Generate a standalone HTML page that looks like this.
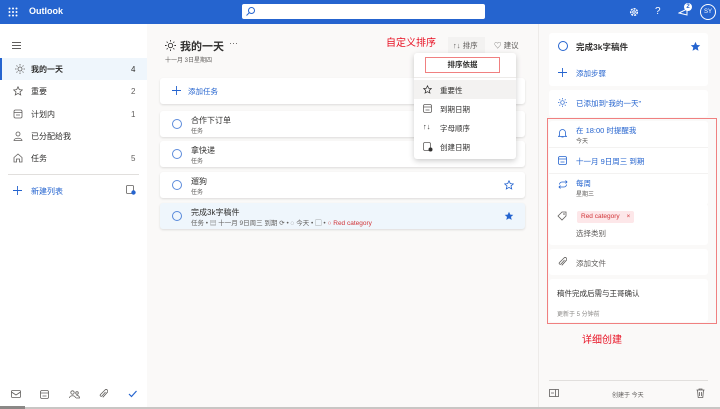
<!DOCTYPE html>
<html><head><meta charset="utf-8">
<style>
*{margin:0;padding:0;box-sizing:border-box}
body{width:720px;height:409px;overflow:hidden;font-family:"Liberation Sans","Noto Sans CJK SC",sans-serif;background:#faf9f8;position:relative;font-size:8px;color:#323130}
.a{position:absolute}
.top{left:0;top:0;width:720px;height:24px;background:#2564cf}
.side{left:0;top:24px;width:147px;height:385px;background:#fff}
.nav{position:absolute;left:0;width:147px;height:22px;display:flex;align-items:center}
.nav .ic{position:absolute;left:13px;width:10px;height:10px}
.nav .t{position:absolute;left:31px;font-size:8px}
.nav .n{position:absolute;left:131px;font-size:8px;color:#605e5c}
.card{position:absolute;background:#fff;border-radius:3px;box-shadow:0 1px 2px rgba(0,0,0,.12)}
.task{left:160px;width:365px;height:26px}
.task .c{position:absolute;left:12px;top:8px;width:10px;height:10px;border:1.3px solid #2564cf;border-radius:50%;opacity:.75}
.task .t1{position:absolute;left:31px;top:4px;font-size:8px}
.task .t2{position:absolute;left:31px;top:15px;font-size:6px;color:#605e5c}
.blue{color:#2564cf}
.mi{position:absolute;left:414px;width:102px;height:19px;font-size:7.5px}
.mi span{position:absolute;left:26px;top:5px}
.mi svg{position:absolute;left:9px;top:5px}
.rc{position:absolute;left:549px;width:159px;background:#fff;border-radius:3px}
</style></head><body>
<div class="a top"></div>
<svg class="a" style="left:8px;top:7px" width="10" height="10"><g fill="#fff"><circle cx="1.5" cy="1.5" r="1"/><circle cx="5" cy="1.5" r="1"/><circle cx="8.5" cy="1.5" r="1"/><circle cx="1.5" cy="5" r="1"/><circle cx="5" cy="5" r="1"/><circle cx="8.5" cy="5" r="1"/><circle cx="1.5" cy="8.5" r="1"/><circle cx="5" cy="8.5" r="1"/><circle cx="8.5" cy="8.5" r="1"/></g></svg>
<div class="a" style="left:29px;top:6px;color:#fff;font-size:9px;font-weight:bold">Outlook</div>
<div class="a" style="left:242px;top:4px;width:243px;height:15px;background:#fff;border-radius:2px"></div>
<svg class="a" style="left:245px;top:6px" width="11" height="11"><circle cx="6.5" cy="4.5" r="3" fill="none" stroke="#2564cf" stroke-width="1"/><path d="M4.3 6.7L1.5 9.5" stroke="#2564cf" stroke-width="1"/></svg>
<svg class="a" style="left:629px;top:7px" width="10" height="10"><circle cx="5" cy="5" r="3.3" fill="none" stroke="#fff" stroke-width="1.5" stroke-dasharray="2 1"/><circle cx="5" cy="5" r="1.3" fill="none" stroke="#fff"/></svg>
<div class="a" style="left:655px;top:6px;color:#fff;font-size:10px">?</div>
<svg class="a" style="left:678px;top:7px" width="12" height="10"><path d="M1 6l8-4v6z" fill="none" stroke="#fff"/></svg>
<div class="a" style="left:684px;top:3px;width:8px;height:8px;border-radius:50%;background:#fff;color:#2564cf;font-size:6px;text-align:center;line-height:8px;font-weight:bold">2</div>
<div class="a" style="left:700px;top:4px;width:16px;height:16px;border-radius:50%;border:1px solid #fff;color:#fff;font-size:6px;text-align:center;line-height:14px">SY</div>

<div class="a side"></div>
<div class="a" style="left:12px;top:42px;width:9px;height:1px;background:#605e5c;box-shadow:0 3px 0 #605e5c,0 6px 0 #605e5c"></div>
<div class="nav" style="top:58px;background:#eff6fc;border-left:2px solid #2564cf"><svg class="ic" viewBox="0 0 10 10"><circle cx="5" cy="5" r="2" fill="none" stroke="#605e5c" stroke-width=".8"/><path d="M5 0v1.5M5 8.5V10M0 5h1.5M8.5 5H10M1.5 1.5l1 1M7.5 7.5l1 1M1.5 8.5l1-1M7.5 2.5l1-1" stroke="#605e5c" stroke-width=".8"/></svg><span class="t" style="font-weight:bold;left:29px">我的一天</span><span class="n" style="left:129px;color:#323130">4</span></div>
<div class="nav" style="top:80px"><svg class="ic" viewBox="0 0 10 10"><path d="M5 .8l1.3 2.8 3 .3-2.3 2 .7 3L5 7.4 2.3 8.9l.7-3-2.3-2 3-.3z" fill="none" stroke="#605e5c" stroke-width=".8"/></svg><span class="t">重要</span><span class="n">2</span></div>
<div class="nav" style="top:103px"><svg class="ic" viewBox="0 0 10 10"><rect x="1" y="1" width="8" height="8" rx="1.5" fill="none" stroke="#605e5c" stroke-width=".8"/><path d="M1 3.5h8M3 6h4" stroke="#605e5c" stroke-width=".8"/></svg><span class="t">计划内</span><span class="n">1</span></div>
<div class="nav" style="top:125px"><svg class="ic" viewBox="0 0 10 10"><circle cx="5" cy="3" r="2" fill="none" stroke="#605e5c" stroke-width=".8"/><path d="M1 9.5c0-3 8-3 8 0z" fill="none" stroke="#605e5c" stroke-width=".8"/></svg><span class="t">已分配给我</span></div>
<div class="nav" style="top:147px"><svg class="ic" viewBox="0 0 10 10"><path d="M1 9V4.5L5 1l4 3.5V9H6.5V6h-3v3z" fill="none" stroke="#605e5c" stroke-width=".8"/></svg><span class="t">任务</span><span class="n">5</span></div>
<div class="a" style="left:8px;top:174px;width:131px;height:1px;background:#e1dfdd"></div>
<svg class="a" style="left:13px;top:186px" width="9" height="9"><path d="M4.5 0v9M0 4.5h9" stroke="#2564cf" stroke-width=".9"/></svg>
<div class="a blue" style="left:31px;top:186px;font-size:8px">新建列表</div>
<svg class="a" style="left:126px;top:185px" width="10" height="10"><rect x=".5" y=".5" width="7" height="8" rx="1" fill="none" stroke="#605e5c" stroke-width=".8"/><circle cx="7.5" cy="7.5" r="2.2" fill="#2564cf"/></svg>
<!-- bottom icons -->
<svg class="a" style="left:11px;top:390px" width="10" height="8"><rect x=".5" y=".5" width="9" height="7" rx="1" fill="none" stroke="#605e5c" stroke-width=".8"/><path d="M.5 2l4.5 3 4.5-3" fill="none" stroke="#605e5c" stroke-width=".8"/></svg>
<svg class="a" style="left:40px;top:390px" width="9" height="9"><rect x=".5" y=".5" width="8" height="8" rx="1.5" fill="none" stroke="#605e5c" stroke-width=".8"/><path d="M.5 3h8M2.5 6h4" stroke="#605e5c" stroke-width=".8"/></svg>
<svg class="a" style="left:69px;top:390px" width="11" height="9"><circle cx="3.5" cy="2.5" r="1.7" fill="none" stroke="#605e5c" stroke-width=".8"/><path d="M.5 8c0-3 6-3 6 0" fill="none" stroke="#605e5c" stroke-width=".8"/><circle cx="8" cy="3" r="1.3" fill="none" stroke="#605e5c" stroke-width=".8"/><path d="M7 8h3.5c0-2-1.5-2.7-3-2.5" fill="none" stroke="#605e5c" stroke-width=".8"/></svg>
<svg class="a" style="left:99px;top:389px" width="9" height="10"><path d="M6.5 3L3 7a1 1 0 01-1.5-1.5L6 1a1.6 1.6 0 012.3 2.3L3.8 8.3" fill="none" stroke="#605e5c" stroke-width=".8"/></svg>
<svg class="a" style="left:128px;top:390px" width="9" height="8"><path d="M1 4l2.5 2.5L8.5 1" fill="none" stroke="#2564cf" stroke-width="1.2"/></svg>
<div class="a" style="left:0;top:406px;width:25px;height:3px;background:#8a8886"></div>
<div class="a" style="left:25px;top:407px;width:695px;height:2px;background:#c8c6c4"></div>

<!-- main -->
<svg class="a" style="left:165px;top:40px" width="11" height="11" viewBox="0 0 10 10"><circle cx="5" cy="5" r="2" fill="none" stroke="#323130" stroke-width=".8"/><path d="M5 0v1.5M5 8.5V10M0 5h1.5M8.5 5H10M1.5 1.5l1 1M7.5 7.5l1 1M1.5 8.5l1-1M7.5 2.5l1-1" stroke="#323130" stroke-width=".8"/></svg>
<div class="a" style="left:180px;top:38px;font-size:11px;font-weight:bold">我的一天</div>
<div class="a" style="left:229px;top:38px;font-size:9px;color:#605e5c">···</div>
<div class="a" style="left:165px;top:55px;font-size:6px;color:#605e5c">十一月 3日星期四</div>
<div class="a" style="left:386px;top:34px;font-size:10px;color:#e81123">自定义排序</div>
<div class="a" style="left:448px;top:37px;width:37px;height:16px;background:#f3f2f1"></div>
<div class="a" style="left:453px;top:40px;font-size:7.5px;color:#605e5c">↑↓ 排序</div>
<div class="a" style="left:494px;top:40px;font-size:7.5px;color:#605e5c">♡ 建议</div>

<div class="card" style="left:160px;top:78px;width:365px;height:26px"></div>
<svg class="a" style="left:172px;top:86px" width="9" height="9"><path d="M4.5 0v9M0 4.5h9" stroke="#2564cf" stroke-width=".9"/></svg>
<div class="a blue" style="left:188px;top:86px;font-size:7.5px">添加任务</div>
<div class="card task" style="top:111px"><div class="c"></div><div class="t1">合作下订单</div><div class="t2">任务</div></div>
<div class="card task" style="top:141px"><div class="c"></div><div class="t1">拿快递</div><div class="t2">任务</div></div>
<div class="card task" style="top:172px"><div class="c"></div><div class="t1">遛狗</div><div class="t2">任务</div><svg class="a" style="left:344px;top:8px" width="10" height="10" viewBox="0 0 10 10"><path d="M5 .8l1.3 2.8 3 .3-2.3 2 .7 3L5 7.4 2.3 8.9l.7-3-2.3-2 3-.3z" fill="none" stroke="#2564cf" stroke-width=".8"/></svg></div>
<div class="card task" style="top:203px;background:#eff6fc"><div class="c"></div><div class="t1">完成3k字稿件</div><div class="t2" style="top:14px;font-size:6.5px">任务 • ▤ 十一月 9日周三 到期 ⟳ • ◌ 今天 • ▢ • <span style="color:#d13438">○ Red category</span></div><svg class="a" style="left:344px;top:8px" width="10" height="10" viewBox="0 0 10 10"><path d="M5 .8l1.3 2.8 3 .3-2.3 2 .7 3L5 7.4 2.3 8.9l.7-3-2.3-2 3-.3z" fill="#2564cf"/></svg></div>

<!-- dropdown -->
<div class="a" style="left:414px;top:53px;width:102px;height:106px;background:#fff;border-radius:3px;box-shadow:0 2px 6px rgba(0,0,0,.2)"></div>
<div class="a" style="left:425px;top:57px;width:75px;height:16px;border:1px solid #f08080;font-size:7.5px;font-weight:bold;text-align:center;line-height:14px">排序依据</div>
<div class="a" style="left:414px;top:77px;width:102px;height:1px;background:#edebe9"></div>
<div class="mi" style="top:80px;background:#f3f2f1"><svg width="9" height="9" viewBox="0 0 10 10"><path d="M5 .8l1.3 2.8 3 .3-2.3 2 .7 3L5 7.4 2.3 8.9l.7-3-2.3-2 3-.3z" fill="none" stroke="#323130" stroke-width=".8"/></svg><span>重要性</span></div>
<div class="mi" style="top:99px"><svg width="9" height="9"><rect x=".5" y=".5" width="8" height="8" rx="1.5" fill="none" stroke="#605e5c" stroke-width=".8"/><path d="M.5 3h8M2.5 6h4" stroke="#605e5c" stroke-width=".8"/></svg><span>到期日期</span></div>
<div class="mi" style="top:118px"><span style="left:9px;top:4px">↑↓</span><span>字母顺序</span></div>
<div class="mi" style="top:137px"><svg width="10" height="10"><rect x=".5" y=".5" width="7" height="8" rx="1.5" fill="none" stroke="#605e5c" stroke-width=".8"/><circle cx="7.5" cy="7.5" r="2" fill="#323130"/></svg><span>创建日期</span></div>

<!-- right panel -->
<div class="a" style="left:538px;top:24px;width:1px;height:383px;background:#edebe9"></div>
<div class="rc" style="top:33px;height:53px"></div>
<div class="a" style="left:558px;top:41px;width:10px;height:10px;border:1.2px solid #2564cf;border-radius:50%"></div>
<div class="a" style="left:576px;top:41px;font-size:8.5px;font-weight:bold">完成3k字稿件</div>
<svg class="a" style="left:690px;top:41px" width="11" height="11" viewBox="0 0 10 10"><path d="M5 .8l1.3 2.8 3 .3-2.3 2 .7 3L5 7.4 2.3 8.9l.7-3-2.3-2 3-.3z" fill="#2564cf"/></svg>
<svg class="a" style="left:558px;top:68px" width="9" height="9"><path d="M4.5 0v9M0 4.5h9" stroke="#2564cf" stroke-width=".9"/></svg>
<div class="a blue" style="left:576px;top:68px;font-size:7.5px">添加步骤</div>
<div class="rc" style="top:90px;height:27px"></div>
<svg class="a" style="left:558px;top:98px" width="9" height="9" viewBox="0 0 10 10"><circle cx="5" cy="5" r="2" fill="none" stroke="#2564cf" stroke-width=".8"/><path d="M5 0v1.5M5 8.5V10M0 5h1.5M8.5 5H10M1.5 1.5l1 1M7.5 7.5l1 1M1.5 8.5l1-1M7.5 2.5l1-1" stroke="#2564cf" stroke-width=".8"/></svg>
<div class="a blue" style="left:576px;top:98px;font-size:7.5px">已添加到“我的一天”</div>

<div class="rc" style="top:121px;height:84px"></div>
<div class="a" style="left:549px;top:147px;width:159px;height:1px;background:#f3f2f1"></div>
<div class="a" style="left:549px;top:173px;width:159px;height:1px;background:#f3f2f1"></div>
<svg class="a" style="left:558px;top:128px" width="9" height="10"><path d="M1.5 7.5V4.5a3 3 0 016 0v3l1 1h-8z M3.5 9h2" fill="none" stroke="#2564cf" stroke-width=".8"/></svg>
<div class="a blue" style="left:576px;top:125px;font-size:7.5px">在 18:00 时提醒我</div>
<div class="a" style="left:576px;top:136px;font-size:6px;color:#605e5c">今天</div>
<svg class="a" style="left:558px;top:156px" width="9" height="9"><rect x=".5" y=".5" width="8" height="8" rx="1.5" fill="none" stroke="#2564cf" stroke-width=".8"/><path d="M.5 3h8M2.5 6h4" stroke="#2564cf" stroke-width=".8"/></svg>
<div class="a blue" style="left:576px;top:156px;font-size:7.5px">十一月 9日周三 到期</div>
<svg class="a" style="left:558px;top:180px" width="10" height="9"><path d="M1.5 4.5a2.5 2.5 0 012.5-2.5h5M7.5 .5l1.5 1.5-1.5 1.5M8.5 4.5a2.5 2.5 0 01-2.5 2.5h-5M2.5 8.5L1 7l1.5-1.5" fill="none" stroke="#2564cf" stroke-width=".8"/></svg>
<div class="a blue" style="left:576px;top:178px;font-size:7.5px">每周</div>
<div class="a" style="left:576px;top:189px;font-size:6px;color:#605e5c">星期三</div>

<div class="rc" style="top:204px;height:41px"></div>
<svg class="a" style="left:557px;top:211px" width="10" height="10"><path d="M1 5L5 1h4v4L5 9z" fill="none" stroke="#605e5c" stroke-width=".8"/><circle cx="7" cy="3" r=".8" fill="#605e5c"/></svg>
<div class="a" style="left:577px;top:211px;width:57px;height:12px;background:#fde7e9;border-radius:2px;font-size:6.5px;color:#d13438;padding:2px 0 0 4px">Red category <span style="margin-left:5px">×</span></div>
<div class="a" style="left:576px;top:228px;font-size:7.5px;color:#605e5c">选择类别</div>
<div class="rc" style="top:249px;height:26px"></div>
<svg class="a" style="left:558px;top:257px" width="9" height="10"><path d="M6.5 3L3 7a1 1 0 01-1.5-1.5L6 1a1.6 1.6 0 012.3 2.3L3.8 8.3" fill="none" stroke="#605e5c" stroke-width=".8"/></svg>
<div class="a" style="left:576px;top:258px;font-size:7.5px;color:#605e5c">添加文件</div>
<div class="rc" style="top:279px;height:43px"></div>
<div class="a" style="left:557px;top:288px;font-size:7.5px">稿件完成后需与王哥确认</div>
<div class="a" style="left:557px;top:309px;font-size:6px;color:#8a8886">更新于 5 分钟前</div>
<div class="a" style="left:547px;top:118px;width:170px;height:206px;border:1px solid #f08080"></div>
<div class="a" style="left:582px;top:331px;font-size:10px;color:#e81123">详细创建</div>

<div class="a" style="left:549px;top:380px;width:159px;height:1px;background:#e1dfdd"></div>
<svg class="a" style="left:549px;top:389px" width="10" height="8"><rect x=".5" y=".5" width="9" height="7" fill="none" stroke="#605e5c" stroke-width=".8"/><path d="M6.5.5v7M2 4h3" stroke="#605e5c" stroke-width=".8"/></svg>
<div class="a" style="left:612px;top:390px;font-size:6px;color:#605e5c">创建于 今天</div>
<svg class="a" style="left:696px;top:388px" width="9" height="10"><path d="M.5 2h8M3 2V1h3v1M1.5 2l.7 7.5h4.6L7.5 2M3.5 4v4M5.5 4v4" fill="none" stroke="#605e5c" stroke-width=".8"/></svg>
</body></html>
